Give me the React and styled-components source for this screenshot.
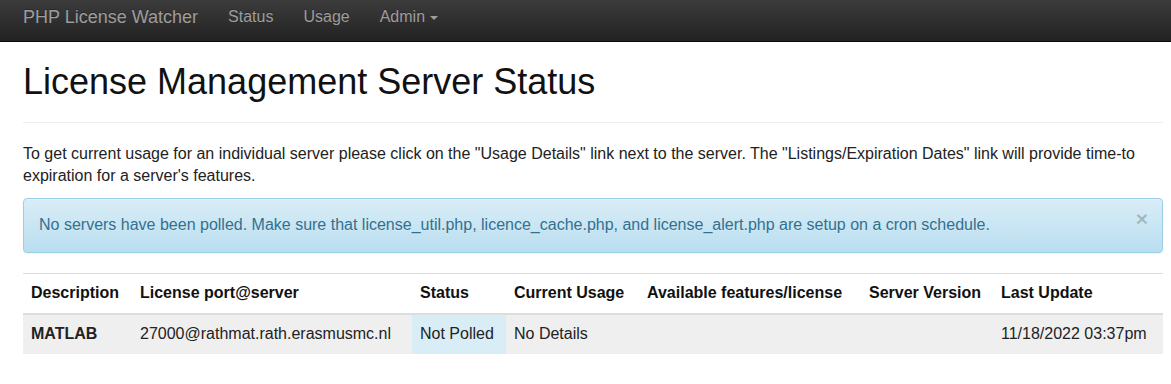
import React from "react";
import styled, { createGlobalStyle } from "styled-components";

const Global = createGlobalStyle`
  html, body { margin: 0; padding: 0; background: #fff; }
  body {
    font-family: "Liberation Sans", Arial, Helvetica, sans-serif;
    font-size: 16px;
    line-height: 1.42857143;
    color: #333;
  }
  * { box-sizing: border-box; }
`;

const Navbar = styled.nav`
  height: 42px;
  background-image: linear-gradient(to bottom, #3c3c3c 0, #222 100%);
  border-bottom: 1px solid #080808;
  display: flex;
  align-items: flex-start;
  padding-left: 23px;
`;

const Brand = styled.a`
  font-size: 18px;
  line-height: 20px;
  color: #9d9d9d;
  padding-top: 7px;
  margin-right: 15px;
  text-shadow: 0 -1px 0 rgba(0, 0, 0, 0.25);
  text-decoration: none;
`;

const NavLink = styled.a`
  font-size: 16px;
  line-height: 20px;
  color: #9d9d9d;
  padding: 7px 15px 0;
  text-shadow: 0 -1px 0 rgba(0, 0, 0, 0.25);
  text-decoration: none;
  display: flex;
  align-items: center;
`;

const Caret = styled.span`
  display: inline-block;
  width: 0;
  height: 0;
  margin-left: 5px;
  margin-top: 2px;
  border-top: 4px solid #9d9d9d;
  border-left: 4px solid transparent;
  border-right: 4px solid transparent;
`;

const Container = styled.main`
  padding: 0 8px 0 23px;
`;

const PageHeader = styled.div`
  margin-top: 20px;
  border-bottom: 1px solid #eee;
  padding-bottom: 20px;
  margin-bottom: 20px;
`;

const H1 = styled.h1`
  margin: 0;
  font-size: 36px;
  font-weight: 500;
  line-height: 1.1;
  color: #111;
`;

const Para = styled.p`
  margin: 0 0 10px;
  color: #222;
`;

const Alert = styled.div`
  position: relative;
  padding: 15px 35px 15px 15px;
  margin-bottom: 20px;
  border: 1px solid #9acfea;
  border-radius: 4px;
  color: #31708f;
  background-image: linear-gradient(to bottom, #d9edf7 0, #b9def0 100%);
  box-shadow: inset 0 1px 0 rgba(255, 255, 255, 0.25), 0 1px 2px rgba(0, 0, 0, 0.05);
  text-shadow: 0 1px 0 rgba(255, 255, 255, 0.2);
`;

const Close = styled.button`
  position: absolute;
  top: 9px;
  right: 14px;
  padding: 0;
  border: 0;
  background: transparent;
  font-family: "Liberation Sans", Arial, sans-serif;
  font-size: 21px;
  font-weight: bold;
  line-height: 1;
  color: #000;
  opacity: 0.2;
  text-shadow: 0 1px 0 #fff;
  cursor: pointer;
`;

const Table = styled.table`
  width: 100%;
  border-collapse: collapse;
  border-spacing: 0;
  table-layout: fixed;
  color: #111;
`;

const Th = styled.th`
  text-align: left;
  font-weight: bold;
  padding: 8px;
  line-height: 1.42857143;
  vertical-align: bottom;
  border-top: 1px solid #ddd;
  border-bottom: 2px solid #ddd;
  white-space: nowrap;
`;

const Td = styled.td`
  padding: 8px;
  line-height: 1.42857143;
  vertical-align: top;
  border-top: 1px solid #ddd;
  background: ${(p) => (p.$info ? "#d9edf7" : "#efefef")};
  font-weight: ${(p) => (p.$bold ? "bold" : "normal")};
  white-space: nowrap;
  color: #222;
`;

const columns = [
  { label: "Description", width: 109 },
  { label: "License port@server", width: 280 },
  { label: "Status", width: 94 },
  { label: "Current Usage", width: 133 },
  { label: "Available features/license", width: 222 },
  { label: "Server Version", width: 132 },
  { label: "Last Update", width: 170 },
];

export default function App() {
  return (
    <>
      <Global />
      <Navbar>
        <Brand href="#">PHP License Watcher</Brand>
        <NavLink href="#">Status</NavLink>
        <NavLink href="#">Usage</NavLink>
        <NavLink href="#">
          Admin <Caret />
        </NavLink>
      </Navbar>
      <Container>
        <PageHeader>
          <H1>License Management Server Status</H1>
        </PageHeader>
        <Para>
          To get current usage for an individual server please click on the "Usage Details" link next to the
          server. The "Listings/Expiration Dates" link will provide time-to expiration for a server's features.
        </Para>
        <Alert>
          <Close aria-label="Close">×</Close>
          No servers have been polled. Make sure that license_util.php, licence_cache.php, and license_alert.php
          are setup on a cron schedule.
        </Alert>
        <Table>
          <colgroup>
            {columns.map((c) => (
              <col key={c.label} style={{ width: c.width }} />
            ))}
          </colgroup>
          <thead>
            <tr>
              {columns.map((c) => (
                <Th key={c.label}>{c.label}</Th>
              ))}
            </tr>
          </thead>
          <tbody>
            <tr>
              <Td $bold>MATLAB</Td>
              <Td>27000@rathmat.rath.erasmusmc.nl</Td>
              <Td $info>Not Polled</Td>
              <Td>No Details</Td>
              <Td></Td>
              <Td></Td>
              <Td>11/18/2022 03:37pm</Td>
            </tr>
          </tbody>
        </Table>
      </Container>
    </>
  );
}
